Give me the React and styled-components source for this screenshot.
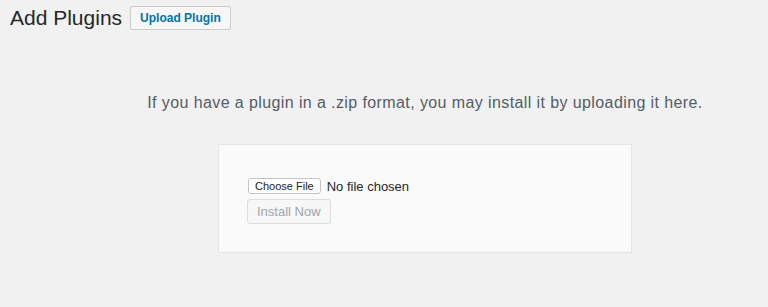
import React from 'react';
import styled, { createGlobalStyle } from 'styled-components';

const GlobalStyle = createGlobalStyle`
    html, body {
        margin: 0;
        background: #f1f1f1;
        font-family: "Liberation Sans", Arial, sans-serif;
        color: #23282d;
        overflow: hidden;
    }
`;

const Page = styled.div`
    width: 768px;
    height: 307px;
    padding: 6px 10px 0 10px;
    box-sizing: border-box;
    overflow: hidden;
`;

const HeaderRow = styled.div`
    display: flex;
    align-items: center;
    gap: 8px;
    height: 24px;
`;

const Title = styled.h1`
    margin: 0;
    font-size: 21px;
    font-weight: 400;
    color: #23282d;
    line-height: 24px;
`;

const ActionButton = styled.button`
    height: 24px;
    padding: 0 9px;
    border: 1px solid #cccccc;
    border-radius: 2px;
    background: #f7f7f7;
    color: #0073aa;
    font-family: inherit;
    font-size: 12px;
    font-weight: 700;
`;

/* the upload area is centred in the full-width content column, wider than the view */
const UploadSection = styled.div`
    width: 830px;
    display: flex;
    flex-direction: column;
    align-items: center;
    padding-top: 60px;
`;

const Help = styled.p`
    margin: 0 0 28px 0;
    font-size: 16px;
    letter-spacing: 0.4px;
    color: #555d66;
    line-height: 26px;
    white-space: nowrap;
`;

const UploadCard = styled.div`
    width: 414px;
    height: 109px;
    box-sizing: border-box;
    background: #fafafa;
    border: 1px solid #e5e5e5;
    padding: 33px 29px 0 29px;
    display: flex;
    flex-direction: column;
    align-items: flex-start;
    gap: 5px;
`;

const FileRow = styled.div`
    display: flex;
    align-items: center;
    gap: 6px;
`;

const ChooseButton = styled.button`
    height: 16px;
    padding: 0 6px;
    border: 1px solid #c4c4c4;
    border-radius: 3px;
    background: #ffffff;
    color: #222;
    font-family: inherit;
    font-size: 11px;
    line-height: 14px;
`;

const NoFile = styled.span`
    font-size: 13px;
    color: #23282d;
`;

const InstallButton = styled.button`
    box-sizing: border-box;
    height: 25px;
    min-height: 25px;
    padding: 0 9px;
    border: 1px solid #dddddd;
    border-radius: 3px;
    background: #f7f7f7;
    color: #a0a5aa;
    font-family: inherit;
    font-size: 13px;
    line-height: 23px;
    margin-left: -1px;
`;

export default function App() {
    return (
        <>
            <GlobalStyle />
            <Page>
                <HeaderRow>
                    <Title>Add Plugins</Title>
                    <ActionButton>Upload Plugin</ActionButton>
                </HeaderRow>
                <UploadSection>
                    <Help>If you have a plugin in a .zip format, you may install it by uploading it here.</Help>
                    <UploadCard>
                        <FileRow>
                            <ChooseButton>Choose File</ChooseButton>
                            <NoFile>No file chosen</NoFile>
                        </FileRow>
                        <InstallButton disabled>Install Now</InstallButton>
                    </UploadCard>
                </UploadSection>
            </Page>
        </>
    );
}
